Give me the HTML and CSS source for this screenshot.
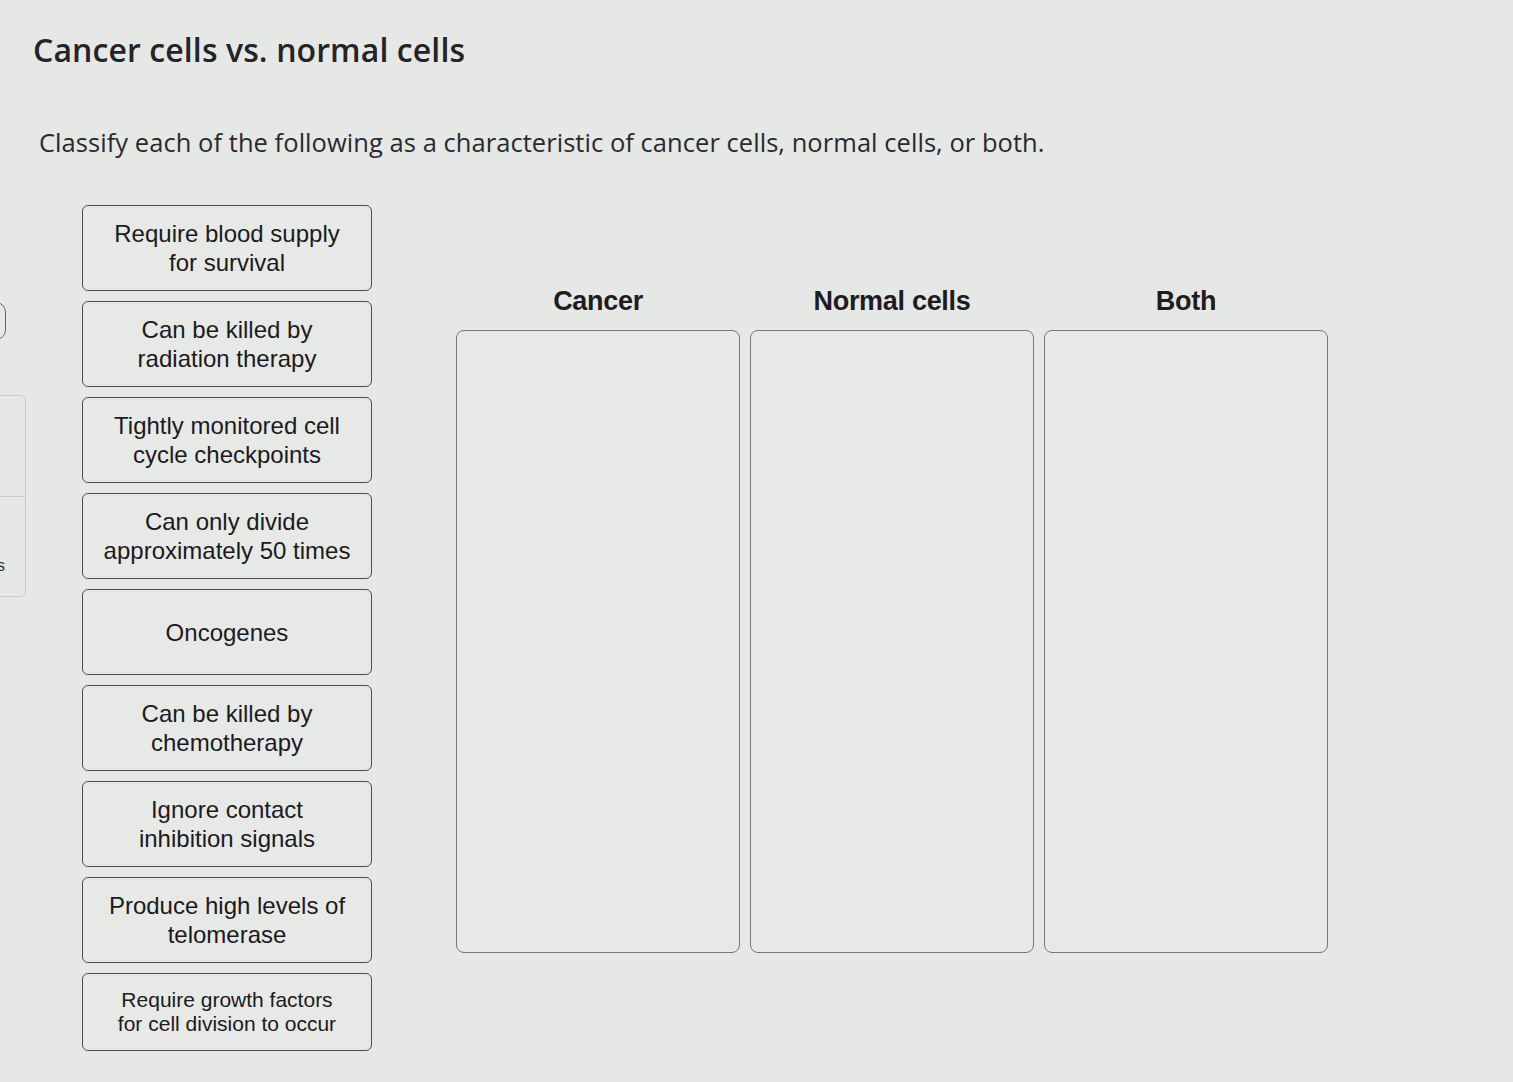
FILE: index.html
```html
<!DOCTYPE html>
<html lang="en">
<head>
<meta charset="utf-8">
<title>Cancer cells vs. normal cells</title>
<link rel="stylesheet" href="styles.css">
</head>
<body>
<div class="edge-panel">
  <div class="edge-cell"></div>
  <div class="edge-cell"><span class="edge-letter">s</span></div>
</div>
<div class="edge-paren"></div>
<main class="page">
  <h1 class="title">Cancer cells vs. normal cells</h1>
  <p class="prompt">Classify each of the following as a characteristic of cancer cells, normal cells, or both.</p>
  <div class="workspace">
    <div class="pool">
      <div class="card">Require blood supply<br>for survival</div>
      <div class="card">Can be killed by<br>radiation therapy</div>
      <div class="card">Tightly monitored cell<br>cycle checkpoints</div>
      <div class="card">Can only divide<br>approximately 50 times</div>
      <div class="card">Oncogenes</div>
      <div class="card">Can be killed by<br>chemotherapy</div>
      <div class="card">Ignore contact<br>inhibition signals</div>
      <div class="card">Produce high levels of<br>telomerase</div>
      <div class="card small">Require growth factors<br>for cell division to occur</div>
    </div>
    <div class="zones">
      <div class="zone">
        <div class="zone-label">Cancer</div>
        <div class="zone-box"></div>
      </div>
      <div class="zone">
        <div class="zone-label">Normal cells</div>
        <div class="zone-box"></div>
      </div>
      <div class="zone">
        <div class="zone-label">Both</div>
        <div class="zone-box"></div>
      </div>
    </div>
  </div>
</main>
</body>
</html>
```
FILE: styles.css
```css
html, body {
  margin: 0;
  padding: 0;
}
body {
  background: #e5e8e5;
  color: #1f1d24;
  font-family: "Liberation Sans", Arial, sans-serif;
  width: 1513px;
  height: 1082px;
  overflow: hidden;
  position: relative;
}
.page {
  padding: 28px 0 0 33px;
}
.title {
  margin: 0;
  font-family: "Open Sans", "Liberation Sans", sans-serif;
  font-weight: 600;
  font-size: 32px;
  line-height: 44px;
  color: #25232a;
  letter-spacing: 0.1px;
}
.prompt {
  margin: 53px 0 0 6px;
  font-family: "Open Sans", "Liberation Sans", sans-serif;
  font-size: 25.5px;
  line-height: 34px;
  color: #2b2930;
  letter-spacing: 0.05px;
}
.workspace {
  display: flex;
  margin-top: 46px;
}
.pool {
  display: flex;
  flex-direction: column;
  gap: 10px;
  width: 290px;
  margin-left: 49px;
}
.card {
  height: 86px;
  box-sizing: border-box;
  border: 1.5px solid #4f4c55;
  border-radius: 6px;
  display: flex;
  align-items: center;
  justify-content: center;
  text-align: center;
  font-size: 24px;
  line-height: 29px;
  color: #1b1a20;
  background: #e7e9e7;
}
.card.small {
  font-size: 21px;
  line-height: 24px;
  height: 78px;
}
.zones {
  display: grid;
  grid-template-columns: repeat(3, 284px);
  column-gap: 10px;
  margin-left: 84px;
  margin-top: 80px;
}
.zone {
  display: flex;
  flex-direction: column;
}
.zone-label {
  text-align: center;
  font-weight: 700;
  font-size: 27px;
  line-height: 32px;
  color: #1e1c22;
  margin-bottom: 13px;
  letter-spacing: -0.3px;
}
.zone-box {
  height: 623px;
  box-sizing: border-box;
  border: 1.5px solid #77747c;
  border-radius: 8px;
  background: #e7e9e7;
}
.edge-panel {
  position: absolute;
  left: -20px;
  top: 395px;
  width: 44px;
  height: 200px;
  border: 1px solid #c9cbc9;
  border-radius: 0 6px 6px 0;
  display: flex;
  flex-direction: column;
}
.edge-cell {
  flex: 1;
  position: relative;
}
.edge-cell + .edge-cell {
  border-top: 1px solid #c9cbc9;
}
.edge-letter {
  position: absolute;
  left: 16px;
  top: 60px;
  font-size: 16px;
  color: #333;
}
.edge-paren {
  position: absolute;
  left: -14px;
  top: 302px;
  width: 18px;
  height: 36px;
  border: 1.5px solid #666;
  border-radius: 0 10px 10px 0;
}
```
